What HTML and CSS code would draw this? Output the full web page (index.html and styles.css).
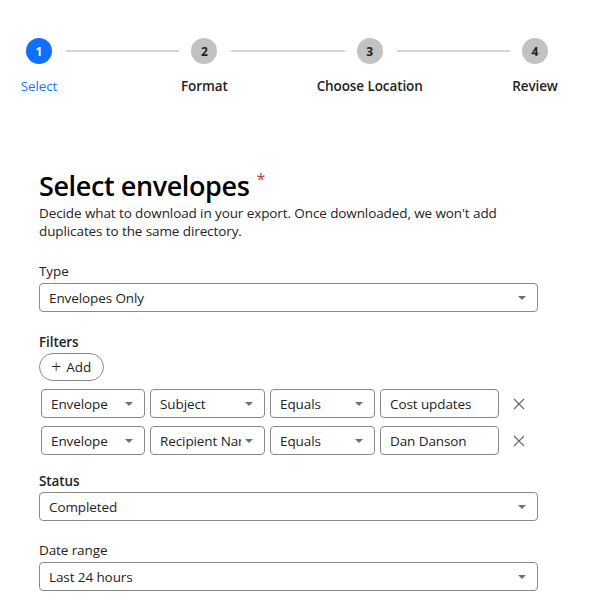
FILE: index.html
```html
<!DOCTYPE html>
<html lang="en">
<head>
<meta charset="utf-8">
<title>Select envelopes</title>
<link rel="stylesheet" href="styles.css">
</head>
<body>
<nav class="stepper">
  <div class="step active"><span class="dot">1</span><span class="step-label">Select</span></div>
  <div class="connector"></div>
  <div class="step"><span class="dot">2</span><span class="step-label">Format</span></div>
  <div class="connector"></div>
  <div class="step"><span class="dot">3</span><span class="step-label">Choose Location</span></div>
  <div class="connector"></div>
  <div class="step"><span class="dot">4</span><span class="step-label">Review</span></div>
</nav>

<main class="form">
  <h1 class="title">Select envelopes<span class="req">*</span></h1>
  <p class="desc">Decide what to download in your export. Once downloaded, we won't add duplicates to the same directory.</p>

  <section class="field field-type">
    <div class="label">Type</div>
    <div class="select full"><span class="value">Envelopes Only</span><span class="caret"></span></div>
  </section>

  <section class="field field-filters">
    <div class="label strong">Filters</div>
    <button class="add-btn"><span class="plus">+</span>Add</button>
    <div class="filter-row first">
      <div class="select w-entity"><span class="value">Envelope</span><span class="caret"></span></div>
      <div class="select w-prop"><span class="value">Subject</span><span class="caret"></span></div>
      <div class="select w-op"><span class="value">Equals</span><span class="caret"></span></div>
      <div class="input w-val">Cost updates</div>
      <span class="remove"><svg width="12" height="12" viewBox="0 0 12 12"><path d="M1 1 L11 11 M11 1 L1 11" stroke="#6b6b6b" stroke-width="1.2" fill="none"/></svg></span>
    </div>
    <div class="filter-row">
      <div class="select w-entity"><span class="value">Envelope</span><span class="caret"></span></div>
      <div class="select w-prop"><span class="value clip">Recipient Name</span><span class="caret"></span></div>
      <div class="select w-op"><span class="value">Equals</span><span class="caret"></span></div>
      <div class="input w-val">Dan Danson</div>
      <span class="remove"><svg width="12" height="12" viewBox="0 0 12 12"><path d="M1 1 L11 11 M11 1 L1 11" stroke="#6b6b6b" stroke-width="1.2" fill="none"/></svg></span>
    </div>
  </section>

  <section class="field field-status">
    <div class="label strong">Status</div>
    <div class="select full"><span class="value">Completed</span><span class="caret"></span></div>
  </section>

  <section class="field field-date">
    <div class="label">Date range</div>
    <div class="select full"><span class="value">Last 24 hours</span><span class="caret"></span></div>
  </section>
</main>
</body>
</html>
```

FILE: styles.css
```css
* { box-sizing: border-box; }
html, body { margin: 0; padding: 0; background: #fff; }
body {
  font-family: "Open Sans", "Noto Sans", sans-serif;
  font-size: 13.5px;
  letter-spacing: -0.1px;
  color: #242424;
}

/* Stepper */
.stepper {
  display: flex;
  align-items: flex-start;
  padding: 38px 36px 0 19px;
}
.step {
  width: 40px;
  flex: none;
  display: flex;
  flex-direction: column;
  align-items: center;
}
.dot {
  width: 26px;
  height: 26px;
  border-radius: 50%;
  background: #c2c2c2;
  color: #242424;
  font-weight: 700;
  font-size: 12px;
  display: flex;
  align-items: center;
  justify-content: center;
}
.step.active .dot { background: #0f6fff; color: #fff; }
.step-label {
  margin-top: 13px;
  white-space: nowrap;
  line-height: 19px;
  font-weight: 600;
  color: #242424;
}
.step.active .step-label { color: #1f76f0; font-weight: 400; }
.connector {
  flex: 1;
  height: 2px;
  background: #d4d4d4;
  margin: 12px 5px 0 7px;
}

/* Form */
.form {
  margin: 73px 0 0 39px;
  width: 499px;
}
.title {
  margin: 0;
  font-size: 27px;
  letter-spacing: -0.4px;
  line-height: 34px;
  font-weight: 600;
  color: #000;
}
.req {
  color: #d13438;
  font-size: 16px;
  font-weight: 400;
  vertical-align: top;
  margin-left: 7px;
  line-height: 20px;
  letter-spacing: 0;
}
.desc {
  margin: 2px 0 0;
  line-height: 17.5px;
  color: #242424;
}
.field-type { margin-top: 22px; }
.field-filters { margin-top: 21px; }
.field-status { margin-top: 17px; }
.field-date { margin-top: 20px; }

.label {
  line-height: 19px;
  margin-bottom: 2px;
  color: #242424;
}
.label.strong { font-weight: 600; margin-bottom: 1px; }

.select, .input {
  height: 29px;
  border: 1px solid #8a8a8a;
  border-radius: 4px;
  background: #fff;
  display: flex;
  align-items: center;
  padding: 0 10px 0 9px;
  color: #242424;
  white-space: nowrap;
  overflow: hidden;
}
.select .value {
  flex: 1;
  overflow: hidden;
  white-space: nowrap;
}
.caret {
  flex: none;
  width: 0;
  height: 0;
  border-left: 4px solid transparent;
  border-right: 4px solid transparent;
  border-top: 4px solid #707070;
  margin-left: 4px;
  margin-right: 1px;
}
.select.full { width: 499px; }

.add-btn {
  font: inherit;
  color: #242424;
  height: 28px;
  padding: 0 12px 0 11px;
  border: 1px solid #8a8a8a;
  border-radius: 14px;
  background: #fff;
  display: flex;
  align-items: center;
  gap: 5px;
}
.plus { font-size: 18px; font-weight: 300; line-height: 1; margin-top: -2px; }

.filter-row {
  display: flex;
  align-items: center;
  gap: 5px;
  padding-left: 2px;
  margin-top: 8px;
}
.filter-row.first { margin-top: 8px; }
.w-entity { width: 104px; }
.w-prop { width: 115px; }
.w-op { width: 105px; }
.w-val { width: 119px; }
.remove {
  display: flex;
  margin-left: 9px;
}
```
